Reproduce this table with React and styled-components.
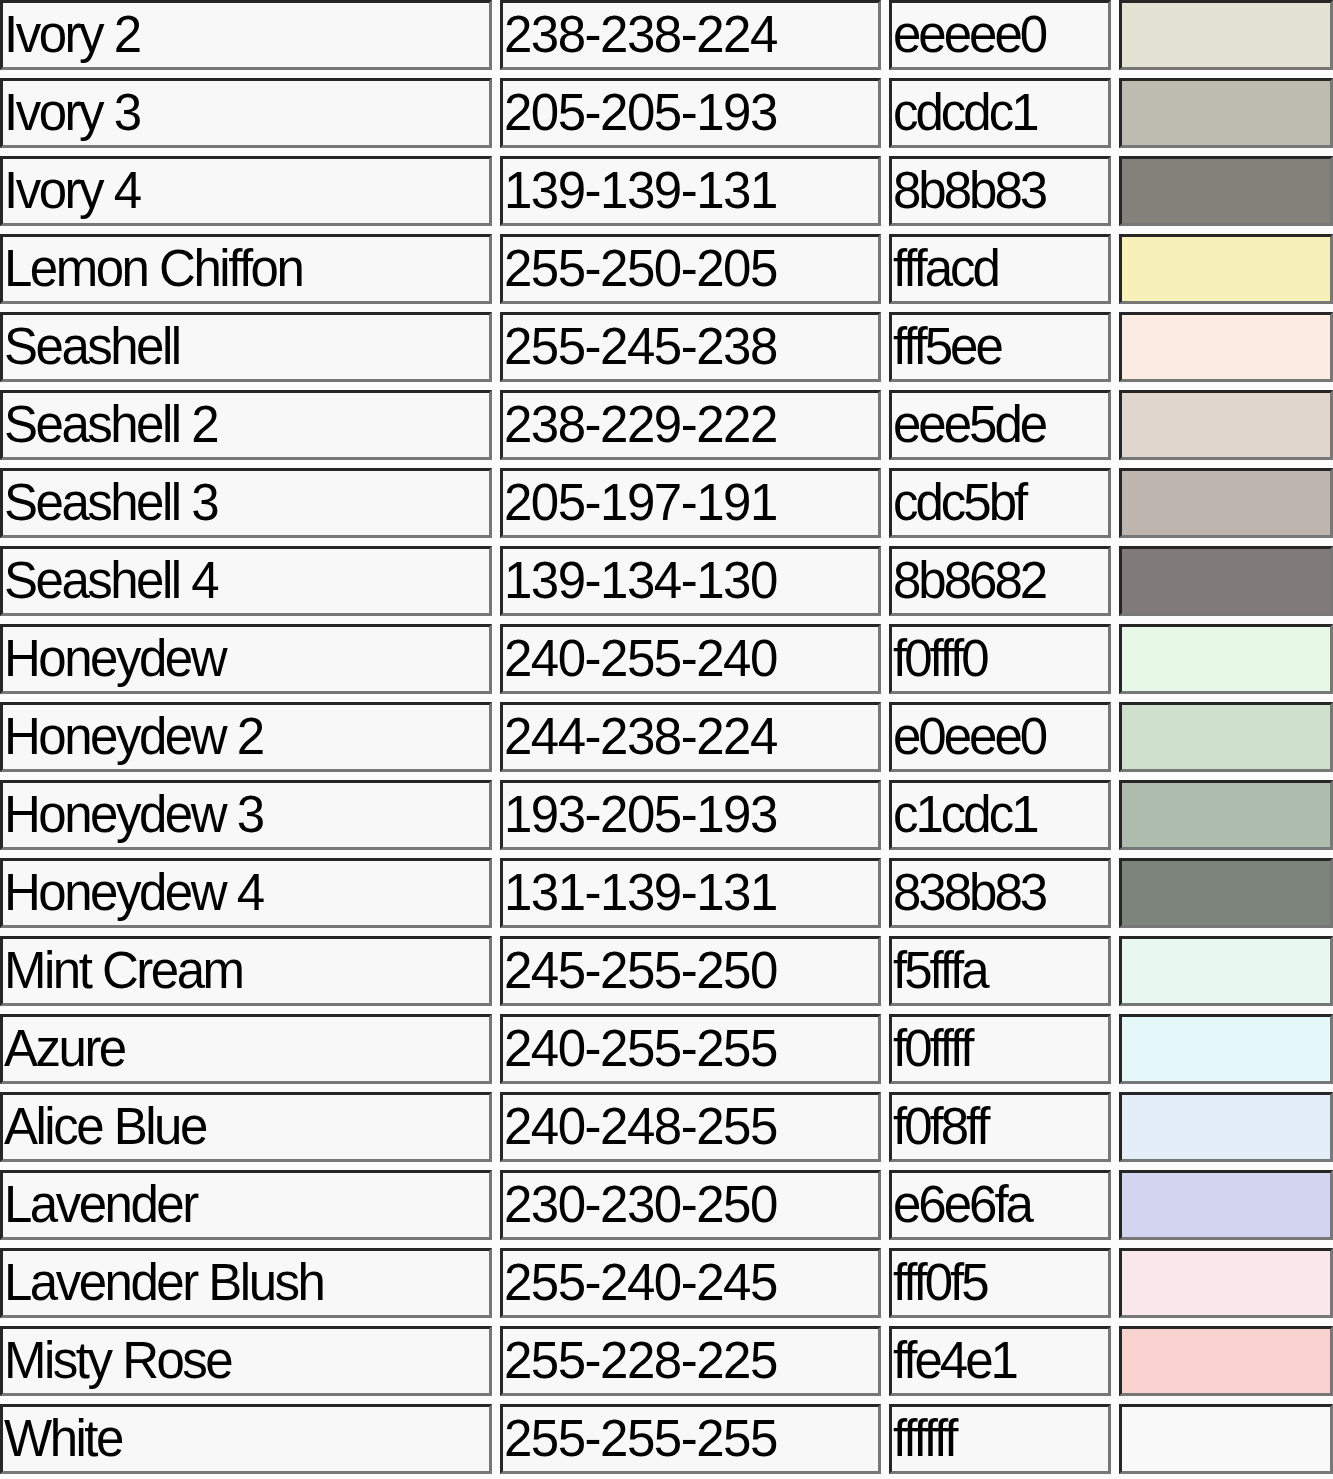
import React from 'react'
import styled, { createGlobalStyle } from 'styled-components'

const GlobalStyle = createGlobalStyle`
body{
    margin: 0;
    background: #fcfcfc;
    font-family: "Liberation Sans", Arial, sans-serif;
}
`;

// the swatch tone is what the picture shows, a bit darker than the hex
const colours = [
    { name: 'Ivory 2', rgb: '238-238-224', hex: 'eeeee0', tone: '#e2e3d2' },
    { name: 'Ivory 3', rgb: '205-205-193', hex: 'cdcdc1', tone: '#bcbdb0' },
    { name: 'Ivory 4', rgb: '139-139-131', hex: '8b8b83', tone: '#82827b' },
    { name: 'Lemon Chiffon', rgb: '255-250-205', hex: 'fffacd', tone: '#f7f0b8' },
    { name: 'Seashell', rgb: '255-245-238', hex: 'fff5ee', tone: '#fbebe3' },
    { name: 'Seashell 2', rgb: '238-229-222', hex: 'eee5de', tone: '#e0d6cd' },
    { name: 'Seashell 3', rgb: '205-197-191', hex: 'cdc5bf', tone: '#bdb5ae' },
    { name: 'Seashell 4', rgb: '139-134-130', hex: '8b8682', tone: '#807b78' },
    { name: 'Honeydew', rgb: '240-255-240', hex: 'f0fff0', tone: '#e8f8e6' },
    { name: 'Honeydew 2', rgb: '244-238-224', hex: 'e0eee0', tone: '#cfe0cc' },
    { name: 'Honeydew 3', rgb: '193-205-193', hex: 'c1cdc1', tone: '#adbcad' },
    { name: 'Honeydew 4', rgb: '131-139-131', hex: '838b83', tone: '#7d847c' },
    { name: 'Mint Cream', rgb: '245-255-250', hex: 'f5fffa', tone: '#e8f8ef' },
    { name: 'Azure', rgb: '240-255-255', hex: 'f0ffff', tone: '#e4f8f9' },
    { name: 'Alice Blue', rgb: '240-248-255', hex: 'f0f8ff', tone: '#e3eef9' },
    { name: 'Lavender', rgb: '230-230-250', hex: 'e6e6fa', tone: '#d3d4ef' },
    { name: 'Lavender Blush', rgb: '255-240-245', hex: 'fff0f5', tone: '#f9e7ec' },
    { name: 'Misty Rose', rgb: '255-228-225', hex: 'ffe4e1', tone: '#f7d2cf' },
    { name: 'White', rgb: '255-255-255', hex: 'ffffff', tone: '#f9f9f9' },
]

const Table = styled.div`
display: flex;
flex-direction: column;
gap: 8px;
width: 1333px;
`;

const Row = styled.div`
display: grid;
grid-template-columns: 492px 381px 222px 214px;
column-gap: 8px;
height: 70px;
`;

const Cell = styled.div`
display: flex;
align-items: center;
box-sizing: border-box;
padding: 0 0 2px 1px;
border-style: solid;
border-width: 3px;
border-color: #262626 #777 #777 #262626;
background: ${p => p.tone || '#f8f8f8'};
color: #000;
font-size: 51px;
letter-spacing: ${p => p.spacing || '-2.5px'};
white-space: nowrap;
overflow: hidden;
`;

export default function App() {
    return (
        <>
            <GlobalStyle />
            <Table>
                {colours.map(c => (
                    <Row key={c.name}>
                        <Cell>{c.name}</Cell>
                        <Cell spacing='-1.5px'>{c.rgb}</Cell>
                        <Cell spacing='-3px'>{c.hex}</Cell>
                        <Cell tone={c.tone} />
                    </Row>
                ))}
            </Table>
        </>
    )
}
